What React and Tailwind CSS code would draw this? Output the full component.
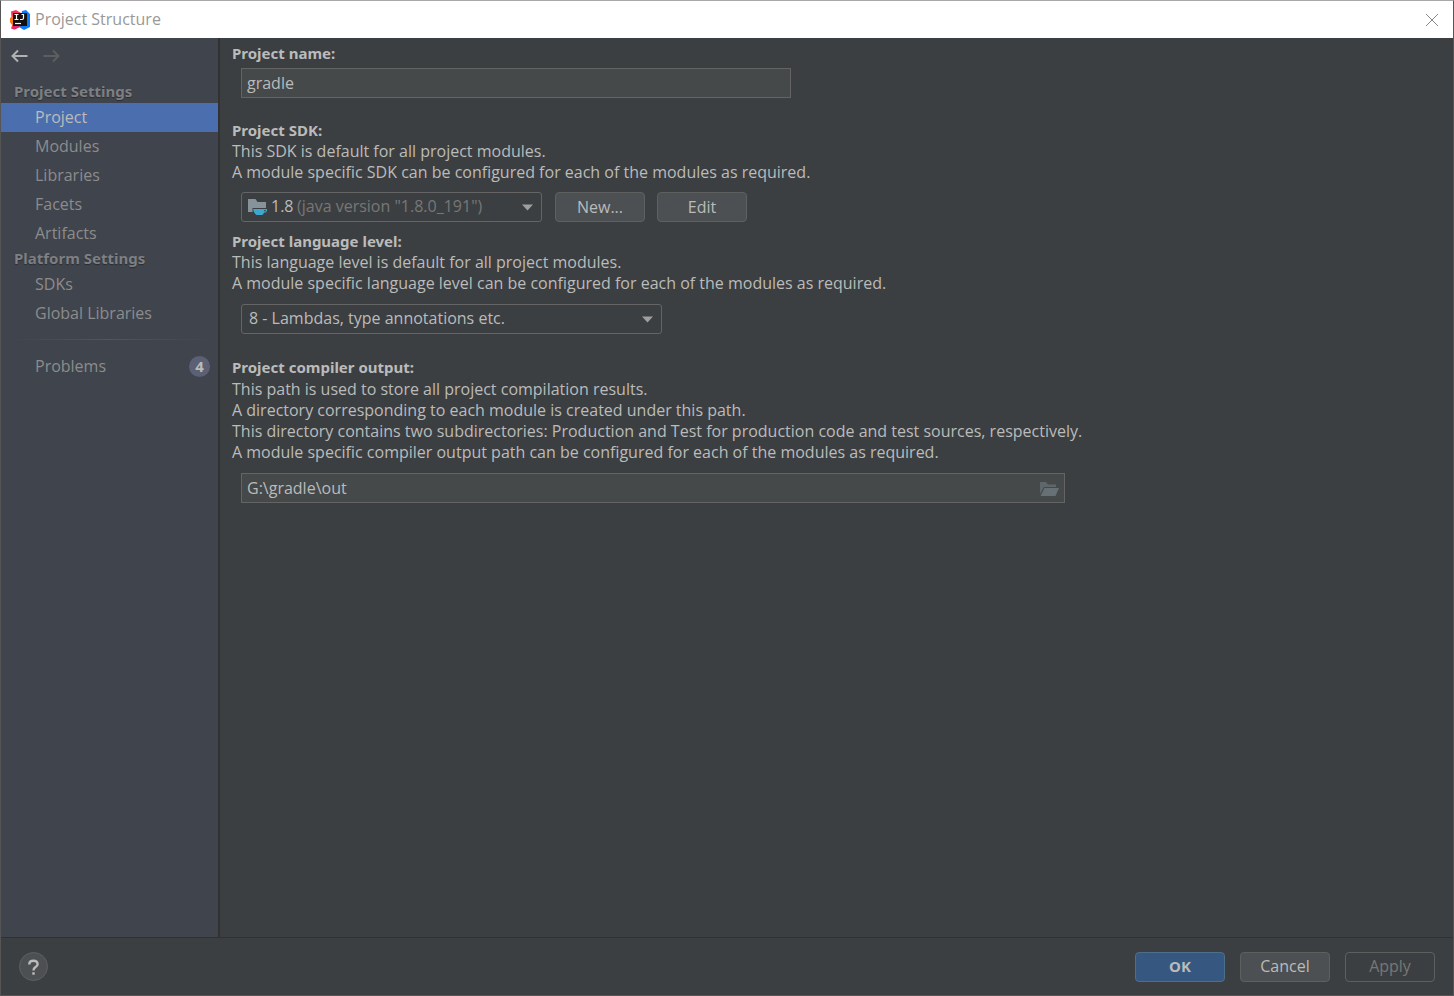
const projectItems = ['Project', 'Modules', 'Libraries', 'Facets', 'Artifacts'];
const platformItems = ['SDKs', 'Global Libraries'];

function AppLogo() {
  return (
    <svg width="20" height="20" viewBox="0 0 20 20" aria-hidden="true">
      <path d="M1 1.500 6 0l5 3-1 14-6 2.500-3-1L2.500 14 0 11l1.500-3.500Z" fill="#fe315d" />
      <path d="M0 8 4 6v9l-2.500-.5L0 12Z" fill="#f97a12" />
      <path d="M12 1 16 0l4 4v13l-6 3-5-3Z" fill="#087cfa" />
      <path d="M3 16h8l-6 3.500-3-1Z" fill="#e6286c" />
      <rect x="3" y="3" width="14" height="13" fill="#151010" />
      <path d="M4.500 4.500h4M6.500 4.500v5M4.500 9.500h4M11.500 4.500h2v3.500q0 1.500-1.500 1.500h-2" fill="none" stroke="#fff" strokeWidth="1.200" />
      <path d="M5 13.500h6" stroke="#fff" strokeWidth="1.200" />
    </svg>
  );
}

function Arrow({ className }) {
  return (
    <svg className={className} width="18" height="14" viewBox="0 0 18 14" fill="none" stroke="currentColor" strokeWidth="2" aria-hidden="true">
      <path d="M17.500 7H2.500M8 1.500 2.500 7 8 12.500" />
    </svg>
  );
}

function Caret() {
  return (
    <svg width="11" height="7" viewBox="0 0 11 7" aria-hidden="true">
      <path d="M0 .5h11L5.500 6.500Z" fill="#9da0a2" />
    </svg>
  );
}

function SdkIcon() {
  return (
    <svg width="20" height="20" viewBox="0 0 20 20" aria-hidden="true">
      <path d="M0 2h7.500l2 3H18v6H4.500v4H0Z" fill="#87939a" />
      <path d="M5 12h14v2q-.5 1.800-3 1.800-.5 1.200-1.800 2.200H8.500Q5.500 16 5 12Z" fill="#3ea6cf" />
      <path d="M16.300 13h1.700q0 1.500-1.700 1.600Z" fill="#3c3f41" />
    </svg>
  );
}

function FolderIcon() {
  return (
    <svg width="19" height="15" viewBox="0 0 19 15" aria-hidden="true">
      <path d="M0 1h6l2 2.500h8V6H4L0 13Z" fill="#5f676b" />
      <path d="M4.500 7H19l-3.500 8H.5Z" fill="#667075" />
    </svg>
  );
}

const strong = "font-['Noto_Sans',sans-serif] text-[15px] font-bold leading-[21px] ";

function NavGroup({ title, items, selected }) {
  return (
    <section>
      <h2 className={strong + 'h-[22px] pl-[13px] text-[#7d7f82] [text-shadow:0_1px_1px_#2b2d33]'}>{title}</h2>
      <ul>
        {items.map((item) => (
          <li key={item}>
            <a
              href="#"
              aria-current={item === selected ? 'page' : undefined}
              className={
                item === selected
                  ? 'block h-[29px] bg-[#4b6eaf] pl-[34px] leading-[29px] text-[#bbbbbb]'
                  : 'block h-[29px] pl-[34px] leading-[29px] text-[#8c8c8c]'
              }
            >
              {item}
            </a>
          </li>
        ))}
      </ul>
    </section>
  );
}

const button = 'h-[30px] w-[90px] rounded border ';

export default function App() {
  return (
    <div className="flex min-h-screen flex-col border border-[#555555] border-t-[#a9a7a7] bg-[#3c3f41] font-['Open_Sans','Noto_Sans',sans-serif] text-[16px] leading-[21px] text-[#bbbbbb]">
      <header className="flex h-[37px] items-center bg-white pl-[9px] pr-[15px] text-[#999999]">
        <AppLogo />
        <h1 className="ml-[5px] flex-1">Project Structure</h1>
        <button aria-label="Close">
          <svg width="12" height="12" viewBox="0 0 12 12" fill="none" stroke="#888888" aria-hidden="true">
            <path d="m0 0 12 12M12 0 0 12" />
          </svg>
        </button>
      </header>

      <div className="flex flex-1">
        <nav className="w-[219px] shrink-0 border-r-2 border-[#323232] bg-[#40444c]">
          <div className="flex h-[43px] items-start gap-[15px] pl-[9px] pt-[11px]">
            <button aria-label="Back"><Arrow className="text-[#afb1b3]" /></button>
            <button aria-label="Forward" disabled><Arrow className="rotate-180 text-[#5c5e60]" /></button>
          </div>
          <NavGroup title="Project Settings" items={projectItems} selected="Project" />
          <NavGroup title="Platform Settings" items={platformItems} />
          <div className="mx-2 mb-3 mt-[11px] h-px bg-linear-to-r from-transparent via-[#54565e] to-transparent" />
          <a href="#" className="flex h-[29px] items-center justify-between pl-[34px] pr-2 text-[#8c8c8c]">
            Problems
            <span className={strong + 'size-[21px] rounded-full bg-[#5c6074] text-center text-[#bbbbbb]'}>4</span>
          </a>
        </nav>

        <main className="flex-1 px-3 pt-[5px]">
          <label htmlFor="name" className={strong + 'block'}>Project name:</label>
          <input id="name" defaultValue="gradle" className="ml-[9px] mt-1 block h-[30px] w-[550px] border border-[#646464] bg-[#45494a] px-[5px] pb-px outline-none" />

          <label htmlFor="sdk" className={strong + 'mt-[22px] block'}>Project SDK:</label>
          <p>This SDK is default for all project modules.</p>
          <p>A module specific SDK can be configured for each of the modules as required.</p>
          <div className="ml-[9px] mt-[9px] flex gap-[13px]">
            <div className="grid h-[30px] w-[301px] rounded-[3px] border border-[#646464]">
              <select id="sdk" className="col-start-1 row-start-1 appearance-none bg-transparent pb-px pl-[29px] outline-none">
                <option>1.8</option>
              </select>
              <div className="pointer-events-none col-start-1 row-start-1 flex items-center pl-[6px] pr-2">
                <SdkIcon />
                <span className="ml-[29px] flex-1 pb-px text-[#777777]">(java version "1.8.0_191")</span>
                <Caret />
              </div>
            </div>
            <div className="flex gap-3">
              <button className={button + 'border-[#5e6060] bg-[#4c5052]'}>New...</button>
              <button className={button + 'border-[#5e6060] bg-[#4c5052]'}>Edit</button>
            </div>
          </div>

          <label htmlFor="level" className={strong + 'mt-[9px] block'}>Project language level:</label>
          <p>This language level is default for all project modules.</p>
          <p>A module specific language level can be configured for each of the modules as required.</p>
          <div className="ml-[9px] mt-[10px] grid h-[30px] w-[421px] rounded-[3px] border border-[#646464]">
            <select id="level" className="col-start-1 row-start-1 appearance-none bg-transparent pb-px pl-[7px] outline-none">
              <option>8 - Lambdas, type annotations etc.</option>
            </select>
            <div className="pointer-events-none col-start-1 row-start-1 flex items-center justify-end pr-2">
              <Caret />
            </div>
          </div>

          <label htmlFor="output" className={strong + 'mt-[23px] block'}>Project compiler output:</label>
          <div className="pt-px">
            <p>This path is used to store all project compilation results.</p>
            <p>A directory corresponding to each module is created under this path.</p>
            <p>This directory contains two subdirectories: Production and Test for production code and test sources, respectively.</p>
            <p>A module specific compiler output path can be configured for each of the modules as required.</p>
          </div>
          <div className="ml-[9px] mt-[10px] flex h-[30px] w-[824px] items-center border border-[#646464] bg-[#45494a] pr-[5px]">
            <input id="output" defaultValue="G:\gradle\out" className="h-full flex-1 bg-transparent px-[5px] pb-px outline-none" />
            <button aria-label="Browse"><FolderIcon /></button>
          </div>
        </main>
      </div>

      <footer className="flex h-[58px] items-center gap-[15px] border-t border-[#2f3133] px-[18px]">
        <button aria-label="Help" className="mr-auto grid size-[29px] place-items-center rounded-full border border-[#5e6060] bg-[#4c5052]">
          <svg width="11" height="16" viewBox="0 0 11 16" fill="none" stroke="#bbbbbb" strokeWidth="2.400" aria-hidden="true">
            <path d="M1.300 5.500V5Q1.500 1.800 5.500 1.800T9.600 5.200Q9.600 6.800 7.300 8.300 5.500 9.500 5.500 11.500M5.500 13.300v2.500" />
          </svg>
        </button>
        <button className={strong + button + 'border-[#4c708c] bg-[#365880]'}>OK</button>
        <button className={button + 'border-[#5e6060] bg-[#4c5052]'}>Cancel</button>
        <button disabled className={button + 'border-[#5e6060] text-[#777777]'}>Apply</button>
      </footer>
    </div>
  );
}
